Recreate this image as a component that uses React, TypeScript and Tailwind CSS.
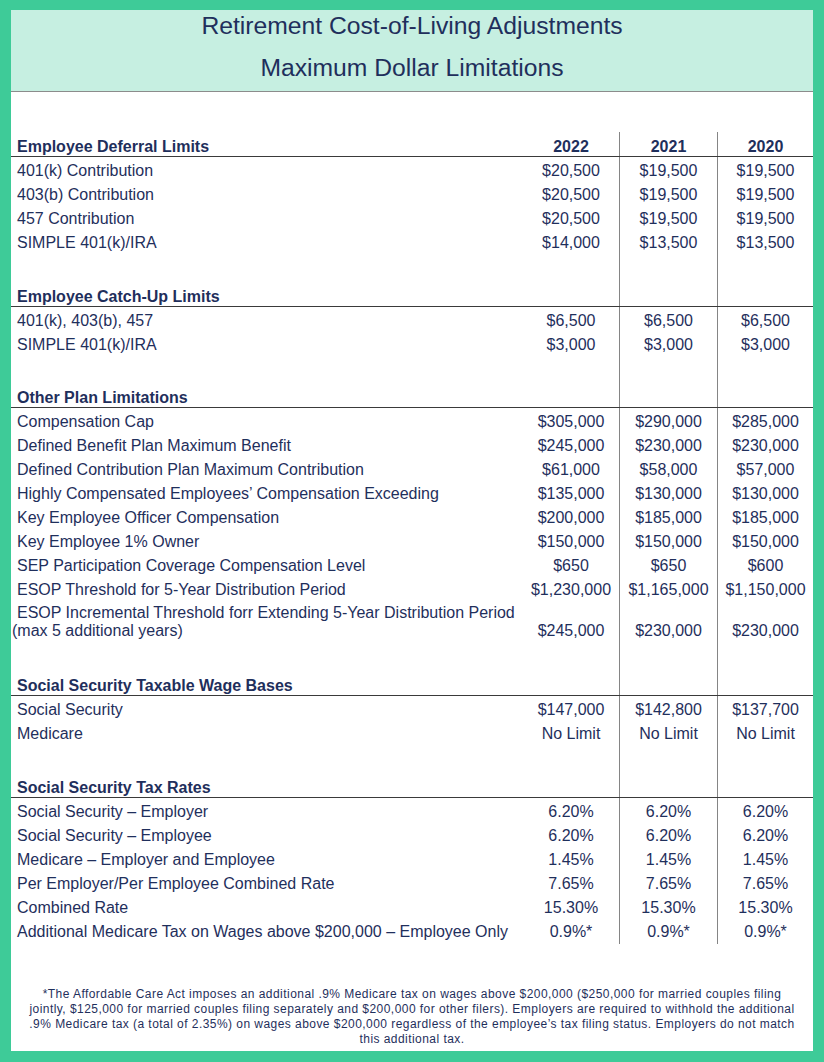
import React from 'react';

type DataRow = { label: string; values: string[]; two?: [string, string] };

type Section = {
  title: string;
  years?: string[];
  gap: string;
  rows: DataRow[];
};

const sections: Section[] = [
  {
    title: 'Employee Deferral Limits',
    years: ['2022', '2021', '2020'],
    gap: '',
    rows: [
      { label: '401(k) Contribution', values: ['$20,500', '$19,500', '$19,500'] },
      { label: '403(b) Contribution', values: ['$20,500', '$19,500', '$19,500'] },
      { label: '457 Contribution', values: ['$20,500', '$19,500', '$19,500'] },
      { label: 'SIMPLE 401(k)/IRA', values: ['$14,000', '$13,500', '$13,500'] },
    ],
  },
  {
    title: 'Employee Catch-Up Limits',
    gap: 'h-[27px]',
    rows: [
      { label: '401(k), 403(b), 457', values: ['$6,500', '$6,500', '$6,500'] },
      { label: 'SIMPLE 401(k)/IRA', values: ['$3,000', '$3,000', '$3,000'] },
    ],
  },
  {
    title: 'Other Plan Limitations',
    gap: 'h-[26px]',
    rows: [
      { label: 'Compensation Cap', values: ['$305,000', '$290,000', '$285,000'] },
      { label: 'Defined Benefit Plan Maximum Benefit', values: ['$245,000', '$230,000', '$230,000'] },
      { label: 'Defined Contribution Plan Maximum Contribution', values: ['$61,000', '$58,000', '$57,000'] },
      { label: 'Highly Compensated Employees’ Compensation Exceeding', values: ['$135,000', '$130,000', '$130,000'] },
      { label: 'Key Employee Officer Compensation', values: ['$200,000', '$185,000', '$185,000'] },
      { label: 'Key Employee 1% Owner', values: ['$150,000', '$150,000', '$150,000'] },
      { label: 'SEP Participation Coverage Compensation Level', values: ['$650', '$650', '$600'] },
      { label: 'ESOP Threshold for 5-Year Distribution Period', values: ['$1,230,000', '$1,165,000', '$1,150,000'] },
      {
        label: '',
        two: ['ESOP Incremental Threshold forr Extending 5-Year Distribution Period', '(max 5 additional years)'],
        values: ['$245,000', '$230,000', '$230,000'],
      },
    ],
  },
  {
    title: 'Social Security Taxable Wage Bases',
    gap: 'h-[27px]',
    rows: [
      { label: 'Social Security', values: ['$147,000', '$142,800', '$137,700'] },
      { label: 'Medicare', values: ['No Limit', 'No Limit', 'No Limit'] },
    ],
  },
  {
    title: 'Social Security Tax Rates',
    gap: 'h-[27px]',
    rows: [
      { label: 'Social Security – Employer', values: ['6.20%', '6.20%', '6.20%'] },
      { label: 'Social Security – Employee', values: ['6.20%', '6.20%', '6.20%'] },
      { label: 'Medicare – Employer and Employee', values: ['1.45%', '1.45%', '1.45%'] },
      { label: 'Per Employer/Per Employee Combined Rate', values: ['7.65%', '7.65%', '7.65%'] },
      { label: 'Combined Rate', values: ['15.30%', '15.30%', '15.30%'] },
      { label: 'Additional Medicare Tax on Wages above $200,000 – Employee Only', values: ['0.9%*', '0.9%*', '0.9%*'] },
    ],
  },
];

function Line({
  label = '',
  values = ['', '', ''],
  className = '',
  labelClass = '',
  cellClass = '',
}: {
  label?: React.ReactNode;
  values?: string[];
  className?: string;
  labelClass?: string;
  cellClass?: string;
}) {
  return (
    <div className={`grid grid-cols-[512px_96px_98px_96px] ${className}`}>
      <div className={labelClass}>{label}</div>
      {values.map((v, i) => (
        <div
          key={i}
          className={`text-center whitespace-nowrap ${i > 0 ? 'border-l border-[#858585]' : ''} ${cellClass}`}
        >
          {v}
        </div>
      ))}
    </div>
  );
}

export default function App() {
  return (
    <div className="h-[1062px] w-[824px] bg-[#3ecb98] pt-[10px] pl-[11px] pr-[11px] pb-[11px] font-['Liberation_Sans',Arial,sans-serif] text-[#1f2f5c]">
      <div className="flex h-full flex-col bg-white">
        {/* Title band */}
        <div className="flex flex-col items-center gap-[14px] border-b border-[#8c8c8c] bg-[#c6efe1] pt-[2px] pb-[9px] text-[24.7px] leading-[28px]">
          <h1>Retirement Cost-of-Living Adjustments</h1>
          <h2>Maximum Dollar Limitations</h2>
        </div>

        {/* Table */}
        <div className="mt-[40px] text-[16px]">
          {sections.map((s) => (
            <div key={s.title}>
              {s.gap && <Line className={s.gap} />}
              <Line
                label={s.title}
                values={s.years}
                className="h-[25px] border-b border-[#3a3a3a] font-bold"
                labelClass="flex items-end pl-[6px] leading-[18px] whitespace-nowrap"
                cellClass="flex items-end justify-center leading-[18px]"
              />
              <Line className="h-[2px]" />
              {s.rows.map((r, i) =>
                r.two ? (
                  <Line
                    key={i}
                    label={
                      <>
                        <span className="block pl-[6px]">{r.two[0]}</span>
                        <span className="block pl-[1px]">{r.two[1]}</span>
                      </>
                    }
                    values={r.values}
                    className="h-[42px]"
                    labelClass="pt-[2px] leading-[18px] whitespace-nowrap"
                    cellClass="flex items-end justify-center pb-[4px] leading-[18px]"
                  />
                ) : (
                  <Line
                    key={i}
                    label={r.label}
                    values={r.values}
                    className="h-6 leading-6"
                    labelClass="pl-[6px] whitespace-nowrap"
                  />
                )
              )}
            </div>
          ))}
        </div>

        {/* Footnote */}
        <p className="mt-auto pb-[4px] text-center text-[12px] leading-[15px] tracking-[0.45px] whitespace-nowrap">
          *The Affordable Care Act imposes an additional .9% Medicare tax on wages above $200,000 ($250,000 for married couples filing
          <br />
          jointly, $125,000 for married couples filing separately and $200,000 for other filers). Employers are required to withhold the additional
          <br />
          .9% Medicare tax (a total of 2.35%) on wages above $200,000 regardless of the employee’s tax filing status. Employers do not match
          <br />
          this additional tax.
        </p>
      </div>
    </div>
  );
}
